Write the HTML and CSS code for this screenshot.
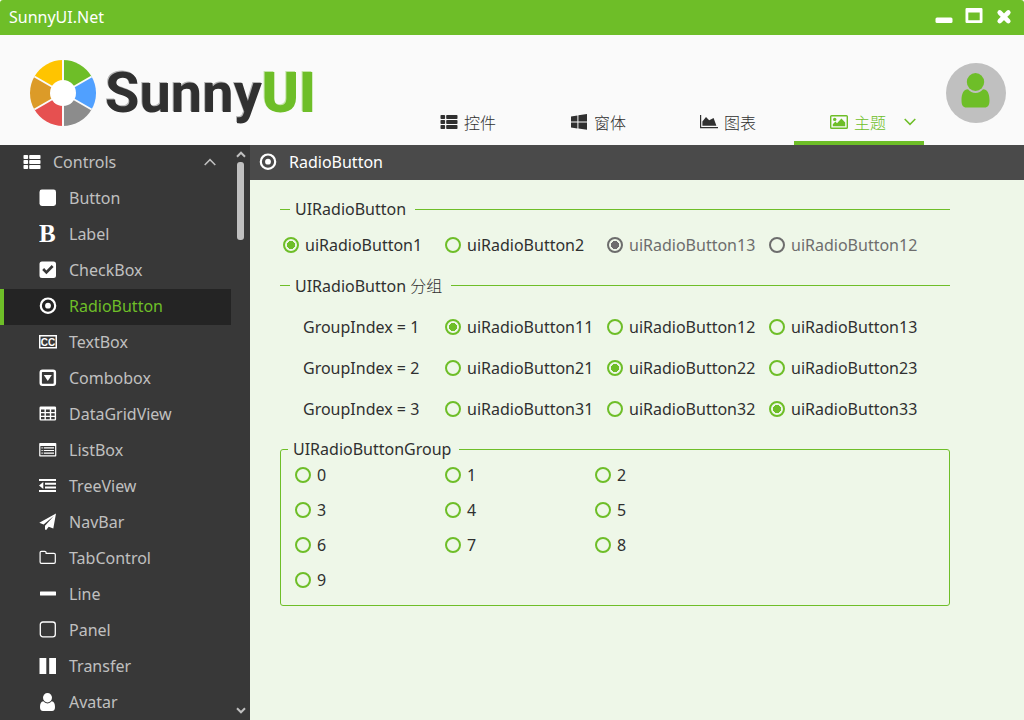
FILE: index.html
```
<!DOCTYPE html>
<html lang="zh-CN">
<head>
    <meta charset="UTF-8">
    <meta name="viewport" content="width=device-width, initial-scale=1.0">
    <title>SunnyUI.Net</title>
    <link rel="stylesheet" href="styles.css">
</head>
<body>

    <!-- Icon sprite -->
    <svg class="sprite" aria-hidden="true">
        <symbol id="i-list" viewBox="0 0 18 18">
            <rect x="0.5" y="2" width="4.6" height="4" rx="0.8"/><rect x="6.2" y="2" width="11.3" height="4" rx="0.8"/>
            <rect x="0.5" y="7" width="4.6" height="4" rx="0.8"/><rect x="6.2" y="7" width="11.3" height="4" rx="0.8"/>
            <rect x="0.5" y="12" width="4.6" height="4" rx="0.8"/><rect x="6.2" y="12" width="11.3" height="4" rx="0.8"/>
        </symbol>
        <symbol id="i-windows" viewBox="0 0 18 18">
            <path d="M1 3.4l6.4-1v6H1zM8.4 2.3L17 1v7.4H8.4zM1 9.4h6.4v6L1 14.5zM8.4 9.4H17v7.4l-8.6-1.2z"/>
        </symbol>
        <symbol id="i-area" viewBox="0 0 18 18">
            <path d="M0 2h1.2v12H18v1.2H0zM2.4 12.8V8.5L6 4l3.2 3.2L13.6 5l2.8 7.8z"/>
        </symbol>
        <symbol id="i-picture" viewBox="0 0 18 18">
            <path fill-rule="evenodd" d="M1.6 2h14.8A1.6 1.6 0 0 1 18 3.6v10.8a1.6 1.6 0 0 1-1.6 1.6H1.6A1.6 1.6 0 0 1 0 14.4V3.6A1.6 1.6 0 0 1 1.6 2zm-.2 1.4v11.2h15.2V3.4z"/>
            <circle cx="4.7" cy="6.4" r="1.7"/>
            <path d="M2.8 13.2v-2l2.6-2.6L7 10.2l4.4-4.6 3.8 4v3.6z"/>
        </symbol>
        <symbol id="i-square" viewBox="0 0 18 18"><rect x="0.5" y="0.5" width="16.5" height="16.5" rx="2.4"/></symbol>
        <symbol id="i-bold" viewBox="0 0 18 18"><text class="glyph-b" x="0" y="17">B</text></symbol>
        <symbol id="i-check" viewBox="0 0 18 18">
            <path fill-rule="evenodd" d="M3 .5h11.500A2.500 2.500 0 0 1 17 3v11.500a2.500 2.500 0 0 1-2.500 2.500H3a2.500 2.500 0 0 1-2.500-2.500V3A2.500 2.500 0 0 1 3 .5zM7.4 13.200l7.200-7.200-1.900-1.900-5.300 5.300-2.300-2.300L3.200 9z"/>
        </symbol>
        <symbol id="i-dot" viewBox="0 0 18 18">
            <circle cx="9" cy="8.700" r="7.200" fill="none" stroke="currentColor" stroke-width="2.200"/><circle cx="9" cy="8.700" r="2.900"/>
        </symbol>
        <symbol id="i-cc" viewBox="0 0 18 18">
            <path fill-rule="evenodd" d="M0 2h18v13.500H0zM1.500 3.500v10.500h15V3.500z"/>
            <text class="glyph-cc" x="9" y="12.700" text-anchor="middle">CC</text>
        </symbol>
        <symbol id="i-combo" viewBox="0 0 18 18">
            <rect x="1.700" y="1.700" width="14.200" height="14.200" rx="1.800" fill="none" stroke="currentColor" stroke-width="2.400"/>
            <path d="M4.800 6h8l-4 6z"/>
        </symbol>
        <symbol id="i-table" viewBox="0 0 18 18">
            <path fill-rule="evenodd" d="M1.800 1.500h14a1.300 1.300 0 0 1 1.300 1.300v11.400a1.300 1.300 0 0 1-1.300 1.300h-14A1.300 1.300 0 0 1 .5 14.200V2.800a1.300 1.300 0 0 1 1.300-1.300zM2 4.500V7h3.500V4.500zm4.900 0V7h3.900V4.500zm5.300 0V7h3.500V4.500zM2 8.200v2.500h3.500V8.200zm4.900 0v2.500h3.900V8.200zm5.300 0v2.500h3.500V8.200zM2 11.900v2.400h3.500v-2.400zm4.900 0v2.400h3.900v-2.400zm5.300 0v2.400h3.500v-2.400z"/>
        </symbol>
        <symbol id="i-listbox" viewBox="0 0 18 18">
            <path fill-rule="evenodd" d="M1 2h15.500a.8.8 0 0 1 .8.8v11.900a.8.8 0 0 1-.8.8H1a.8.8 0 0 1-.8-.8V2.800A.8.8 0 0 1 1 2zm.4 3v9.300h14.700V5z"/>
            <path d="M2.500 6.200h1.200v1.200H2.500zM4.800 6.200h10.200v1.200H4.800zM2.500 8.900h1.200v1.200H2.500zM4.800 8.900h10.200v1.200H4.800zM2.500 11.600h1.200v1.200H2.500zM4.800 11.600h10.200v1.200H4.800z"/>
        </symbol>
        <symbol id="i-outdent" viewBox="0 0 18 18">
            <path d="M0 2h17v2H0zM6 5.700h11v2H6zM6 9.400h11v2H6zM0 13.100h17v2H0zM0 8.500L4.300 5v7z"/>
        </symbol>
        <symbol id="i-plane" viewBox="0 0 18 18">
            <path d="M17 .5L14.300 15.600l-4.600-1.900L7.200 17 6 16.600v-3.900L14.800 3 4.600 11.500.3 9.700z"/>
        </symbol>
        <symbol id="i-folder" viewBox="0 0 18 18">
            <path d="M1.100 3.600a1.300 1.300 0 0 1 1.300-1.300h3.400a1.300 1.300 0 0 1 1.300 1.300v.7h7.900a1.300 1.300 0 0 1 1.300 1.300v7.400a1.300 1.300 0 0 1-1.300 1.300H2.400a1.300 1.300 0 0 1-1.300-1.300z" fill="none" stroke="currentColor" stroke-width="1.200"/>
        </symbol>
        <symbol id="i-minus" viewBox="0 0 18 18"><rect x="1" y="6.500" width="16" height="4" rx="0.500"/></symbol>
        <symbol id="i-panel" viewBox="0 0 18 18">
            <rect x="1.300" y="1" width="15" height="14.800" rx="2.600" fill="none" stroke="currentColor" stroke-width="1.300"/>
        </symbol>
        <symbol id="i-pause" viewBox="0 0 18 18"><path d="M.5 1h6.800v16H.5zM10.200 1H17v16h-6.800z"/></symbol>
        <symbol id="i-user" viewBox="0 0 18 18">
            <ellipse cx="8.500" cy="4.700" rx="4.500" ry="4.700"/>
            <path d="M4.300 8.300a5.200 5.200 0 0 0 8.400 0c2.300.2 3.300 2.500 3.300 5.700 0 2.500-1 4-3 4H4c-2 0-3-1.500-3-4 0-3.200 1-5.500 3.300-5.700z"/>
        </symbol>
        <symbol id="i-down" viewBox="0 0 12 8"><path d="M.7 1L6 6.400 11.300 1" fill="none" stroke="currentColor" stroke-width="1.500"/></symbol>
        <symbol id="i-up" viewBox="0 0 12 8"><path d="M.7 7L6 1.600 11.300 7" fill="none" stroke="currentColor" stroke-width="1.500"/></symbol>
    </svg>

    <div class="window">
        <div class="titlebar">
            <span class="title">SunnyUI.Net</span>
            <button class="win-btn" aria-label="Minimize"><svg width="18" height="18"><rect x="0.500" y="9.500" width="17" height="5.500" rx="1.500"/></svg></button>
            <button class="win-btn" aria-label="Maximize"><svg width="18" height="18"><path fill-rule="evenodd" d="M1.700 0h14.600a1.200 1.200 0 0 1 1.200 1.200v12.600a1.200 1.200 0 0 1-1.200 1.200H1.700a1.200 1.200 0 0 1-1.200-1.200V1.200A1.200 1.200 0 0 1 1.700 0zM3.300 4.500v7.700h11.400V4.500z"/></svg></button>
            <button class="win-btn" aria-label="Close"><svg width="18" height="18"><path d="M4.700 4.500l8.600 8.600M13.300 4.500l-8.600 8.600" stroke="#fff" stroke-width="4.600" stroke-linecap="round"/></svg></button>
        </div>

        <header class="header">
            <div class="logo">
                <svg class="logo-mark" width="66" height="66" viewBox="0 0 66 66">
                    <path fill="#6ebe28" d="M33 33V0a33 33 0 0 1 28.580 16.500z"/>
                    <path fill="#50a0ff" d="M33 33l28.580-16.500a33 33 0 0 1 0 33z"/>
                    <path fill="#8c8c8c" d="M33 33l28.580 16.500A33 33 0 0 1 33 66z"/>
                    <path fill="#e65050" d="M33 33v33A33 33 0 0 1 4.420 49.500z"/>
                    <path fill="#dc9b28" d="M33 33L4.420 49.500a33 33 0 0 1 0-33z"/>
                    <path fill="#ffc400" d="M33 33L4.420 16.500A33 33 0 0 1 33 0z"/>
                    <path stroke="#fafafa" stroke-width="2" d="M33 0v66M4.420 16.500l57.160 33M4.420 49.500l57.160-33"/>
                    <circle cx="33" cy="33" r="13" fill="#fff"/>
                </svg>
                <span class="logo-text">Sunny<b>UI</b></span>
            </div>
            <nav class="nav">
                <a class="nav-item" href="#"><svg class="icon"><use href="#i-list"/></svg>控件</a>
                <a class="nav-item" href="#"><svg class="icon"><use href="#i-windows"/></svg>窗体</a>
                <a class="nav-item" href="#"><svg class="icon"><use href="#i-area"/></svg>图表</a>
                <a class="nav-item active" href="#"><svg class="icon"><use href="#i-picture"/></svg>主题<svg class="chevron"><use href="#i-down"/></svg></a>
            </nav>
            <div class="avatar">
                <svg width="34" height="36" viewBox="0 0 34 36">
                    <ellipse cx="16.500" cy="9" rx="8.700" ry="9"/>
                    <path d="M9 16.200a9.400 9.400 0 0 0 15 0c4.500 0 6.500 4.500 6.500 11 0 5-1.500 7.300-5 7.300H7.500c-3.500 0-5-2.300-5-7.300 0-6.500 2-11 6.500-11z"/>
                </svg>
            </div>
        </header>

        <div class="body">
            <aside class="sidebar">
                <ul class="menu">
                    <li><a class="menu-item parent" href="#"><svg class="icon"><use href="#i-list"/></svg>Controls<svg class="chevron"><use href="#i-up"/></svg></a></li>
                    <li><a class="menu-item" href="#"><svg class="icon"><use href="#i-square"/></svg>Button</a></li>
                    <li><a class="menu-item" href="#"><svg class="icon"><use href="#i-bold"/></svg>Label</a></li>
                    <li><a class="menu-item" href="#"><svg class="icon"><use href="#i-check"/></svg>CheckBox</a></li>
                    <li><a class="menu-item active" href="#"><svg class="icon"><use href="#i-dot"/></svg>RadioButton</a></li>
                    <li><a class="menu-item" href="#"><svg class="icon"><use href="#i-cc"/></svg>TextBox</a></li>
                    <li><a class="menu-item" href="#"><svg class="icon"><use href="#i-combo"/></svg>Combobox</a></li>
                    <li><a class="menu-item" href="#"><svg class="icon"><use href="#i-table"/></svg>DataGridView</a></li>
                    <li><a class="menu-item" href="#"><svg class="icon"><use href="#i-listbox"/></svg>ListBox</a></li>
                    <li><a class="menu-item" href="#"><svg class="icon"><use href="#i-outdent"/></svg>TreeView</a></li>
                    <li><a class="menu-item" href="#"><svg class="icon"><use href="#i-plane"/></svg>NavBar</a></li>
                    <li><a class="menu-item" href="#"><svg class="icon"><use href="#i-folder"/></svg>TabControl</a></li>
                    <li><a class="menu-item" href="#"><svg class="icon"><use href="#i-minus"/></svg>Line</a></li>
                    <li><a class="menu-item" href="#"><svg class="icon"><use href="#i-panel"/></svg>Panel</a></li>
                    <li><a class="menu-item" href="#"><svg class="icon"><use href="#i-pause"/></svg>Transfer</a></li>
                    <li><a class="menu-item" href="#"><svg class="icon"><use href="#i-user"/></svg>Avatar</a></li>
                </ul>
                <div class="scrollbar">
                    <svg width="10" height="7"><path d="M1 5.700L5 1.700l4 4" fill="none" stroke="#c0c0c0" stroke-width="2"/></svg>
                    <div class="thumb"></div>
                    <svg width="10" height="7"><path d="M1 1.300l4 4 4-4" fill="none" stroke="#c0c0c0" stroke-width="2"/></svg>
                </div>
            </aside>

            <main class="main">
                <h1 class="page-title"><svg class="icon"><use href="#i-dot"/></svg>RadioButton</h1>
                <div class="content">
                    <h2 class="line">UIRadioButton</h2>
                    <div class="row">
                        <label class="radio"><input type="radio" name="g0" checked>uiRadioButton1</label>
                        <label class="radio"><input type="radio" name="g0">uiRadioButton2</label>
                        <label class="radio"><input type="radio" name="g0d" checked disabled>uiRadioButton13</label>
                        <label class="radio"><input type="radio" name="g0d" disabled>uiRadioButton12</label>
                    </div>

                    <h2 class="line second"><span>UIRadioButton <span class="cjk">分组</span></span></h2>
                    <div class="groups">
                        <div class="row">
                            <span class="row-label">GroupIndex = 1</span>
                            <label class="radio"><input type="radio" name="g1" checked>uiRadioButton11</label>
                            <label class="radio"><input type="radio" name="g1">uiRadioButton12</label>
                            <label class="radio"><input type="radio" name="g1">uiRadioButton13</label>
                        </div>
                        <div class="row">
                            <span class="row-label">GroupIndex = 2</span>
                            <label class="radio"><input type="radio" name="g2">uiRadioButton21</label>
                            <label class="radio"><input type="radio" name="g2" checked>uiRadioButton22</label>
                            <label class="radio"><input type="radio" name="g2">uiRadioButton23</label>
                        </div>
                        <div class="row">
                            <span class="row-label">GroupIndex = 3</span>
                            <label class="radio"><input type="radio" name="g3">uiRadioButton31</label>
                            <label class="radio"><input type="radio" name="g3">uiRadioButton32</label>
                            <label class="radio"><input type="radio" name="g3" checked>uiRadioButton33</label>
                        </div>
                    </div>

                    <fieldset class="group-box">
                        <legend>UIRadioButtonGroup</legend>
                        <div class="group-grid">
                            <label class="radio"><input type="radio" name="num">0</label>
                            <label class="radio"><input type="radio" name="num">1</label>
                            <label class="radio"><input type="radio" name="num">2</label>
                            <label class="radio"><input type="radio" name="num">3</label>
                            <label class="radio"><input type="radio" name="num">4</label>
                            <label class="radio"><input type="radio" name="num">5</label>
                            <label class="radio"><input type="radio" name="num">6</label>
                            <label class="radio"><input type="radio" name="num">7</label>
                            <label class="radio"><input type="radio" name="num">8</label>
                            <label class="radio"><input type="radio" name="num">9</label>
                        </div>
                    </fieldset>
                </div>
            </main>
        </div>
    </div>

</body>
</html>
```

FILE: styles.css
```
* {
    box-sizing: border-box;
}
body {
    margin: 0;
    font-family: "Noto Sans", "Noto Sans CJK SC", sans-serif;
    font-size: 16px;
    line-height: 24px;
    color: #303030;
}
.sprite {
    display: none;
}
.window {
    display: flex;
    flex-direction: column;
    height: 100vh;
}
a {
    color: inherit;
    text-decoration: none;
}
.icon {
    width: 18px;
    height: 18px;
    flex: none;
    fill: currentColor;
}
.chevron {
    width: 12px;
    height: 8px;
    flex: none;
}
.glyph-b {
    font: bold 25px "Liberation Serif", serif;
}
.glyph-cc {
    font: bold 10px "Liberation Sans", sans-serif;
}

/* Title bar */
.titlebar {
    display: flex;
    align-items: center;
    height: 35px;
    flex: none;
    padding: 0 5px 1px 9px;
    background-color: #6ebe28;
    border-radius: 3px 3px 0 0;
    color: #fff;
}
.title {
    flex: 1;
}
.win-btn {
    display: flex;
    justify-content: center;
    width: 30px;
    padding: 0;
    border: none;
    background: none;
    fill: #fff;
    cursor: pointer;
}

/* Header */
.header {
    display: flex;
    height: 110px;
    flex: none;
    padding: 0 18px 0 30px;
    background-color: #fafafa;
}
.logo {
    display: flex;
    align-items: center;
    gap: 9px;
    padding-top: 5px;
}
.logo-text {
    font-family: Roboto, sans-serif;
    font-size: 56px;
    line-height: 60px;
    font-weight: bold;
    text-shadow: -1px -1px 0 #b4b4b4;
}
.logo-text b {
    color: #6ebe28;
    text-shadow: -1px -1px 0 #c5e5a9;
}
.nav {
    display: flex;
    align-items: flex-end;
    margin-left: auto;
}
.nav-item {
    display: flex;
    align-items: center;
    width: 130px;
    height: 46px;
    padding-left: 36px;
    gap: 6px;
    font-family: "Noto Sans CJK SC", sans-serif;
    font-weight: 300;
}
.nav-item.active {
    color: #6ebe28;
    box-shadow: inset 0 -4px 0 #6ebe28;
}
.nav-item .chevron {
    margin-left: 12px;
}
.avatar {
    display: flex;
    align-items: center;
    justify-content: center;
    width: 60px;
    height: 60px;
    margin: 28px 0 0 22px;
    padding-bottom: 4px;
    border-radius: 50%;
    background-color: #c0c0c0;
    fill: #6ebe28;
}

/* Sidebar */
.body {
    display: flex;
    flex: 1;
    min-height: 0;
}
.sidebar {
    display: flex;
    width: 250px;
    flex: none;
    background-color: #383838;
    color: #c0c0c0;
}
.menu {
    flex: 1;
    margin: 0;
    padding: 0;
    list-style: none;
    overflow: hidden;
}
.menu-item {
    display: flex;
    align-items: center;
    gap: 12px;
    height: 36px;
    padding: 0 15px 2px 35px;
    border-left: 4px solid transparent;
}
.menu-item.parent {
    padding-left: 19px;
}
.menu-item .icon {
    color: #fff;
}
.menu-item .chevron {
    margin-left: auto;
}
.menu-item.active {
    background-color: #242424;
    border-left-color: #6ebe28;
    color: #6ebe28;
}
.scrollbar {
    display: flex;
    flex-direction: column;
    align-items: center;
    width: 19px;
    padding: 6px 0;
}
.thumb {
    width: 7px;
    height: 78px;
    margin: 4px 0 auto;
    border-radius: 3px;
    background-color: #c0c0c0;
}

/* Page */
.main {
    flex: 1;
    background-color: #eef7e8;
}
.page-title {
    display: flex;
    align-items: center;
    gap: 12px;
    height: 35px;
    margin: 0;
    padding: 0 9px 2px;
    background-color: #4a4a4a;
    color: #fff;
    font-size: 16px;
    font-weight: normal;
}
.content {
    padding: 15px 74px 15px 30px;
}
.line {
    display: flex;
    align-items: center;
    gap: 9px;
    height: 28px;
    margin: 0;
    font-size: 16px;
    font-weight: normal;
}
.line::before,
.line::after {
    content: "";
    height: 1px;
    background-color: #6ebe28;
}
.line::before {
    width: 10px;
    margin-right: -4px;
}
.line::after {
    flex: 1;
}
.line.second {
    margin-top: 11px;
}
.cjk {
    font-family: "Noto Sans CJK SC", sans-serif;
    font-weight: 300;
}
.row {
    display: grid;
    grid-template-columns: repeat(4, 162px);
    align-items: center;
    height: 30px;
    padding-left: 3px;
}
.line + .row {
    margin-top: 7px;
}
.groups {
    display: grid;
    gap: 11px;
    margin-top: 13px;
}
.row-label {
    padding-left: 20px;
}
.radio {
    display: flex;
    align-items: center;
    gap: 6px;
}
.radio input {
    appearance: none;
    width: 16px;
    height: 16px;
    margin: 0;
    border: 2px solid #6ebe28;
    border-radius: 50%;
}
.radio input:checked {
    background: radial-gradient(circle, #6ebe28 0 4px, transparent 4px);
}
.radio:has(input:disabled) {
    color: #6d6d6d;
}
.radio input:disabled {
    border-color: #6d6d6d;
}
.radio input:checked:disabled {
    background: radial-gradient(circle, #6d6d6d 0 4px, transparent 4px);
}
.group-box {
    margin: 13px 0 0;
    padding: 2px 7px 13px;
    border: 1px solid #6ebe28;
    border-radius: 3px;
}
.group-box legend {
    padding: 0 8px 0 5px;
}
.group-grid {
    display: grid;
    grid-template-columns: repeat(3, 150px);
    gap: 11px 0;
    padding-left: 7px;
}
```
